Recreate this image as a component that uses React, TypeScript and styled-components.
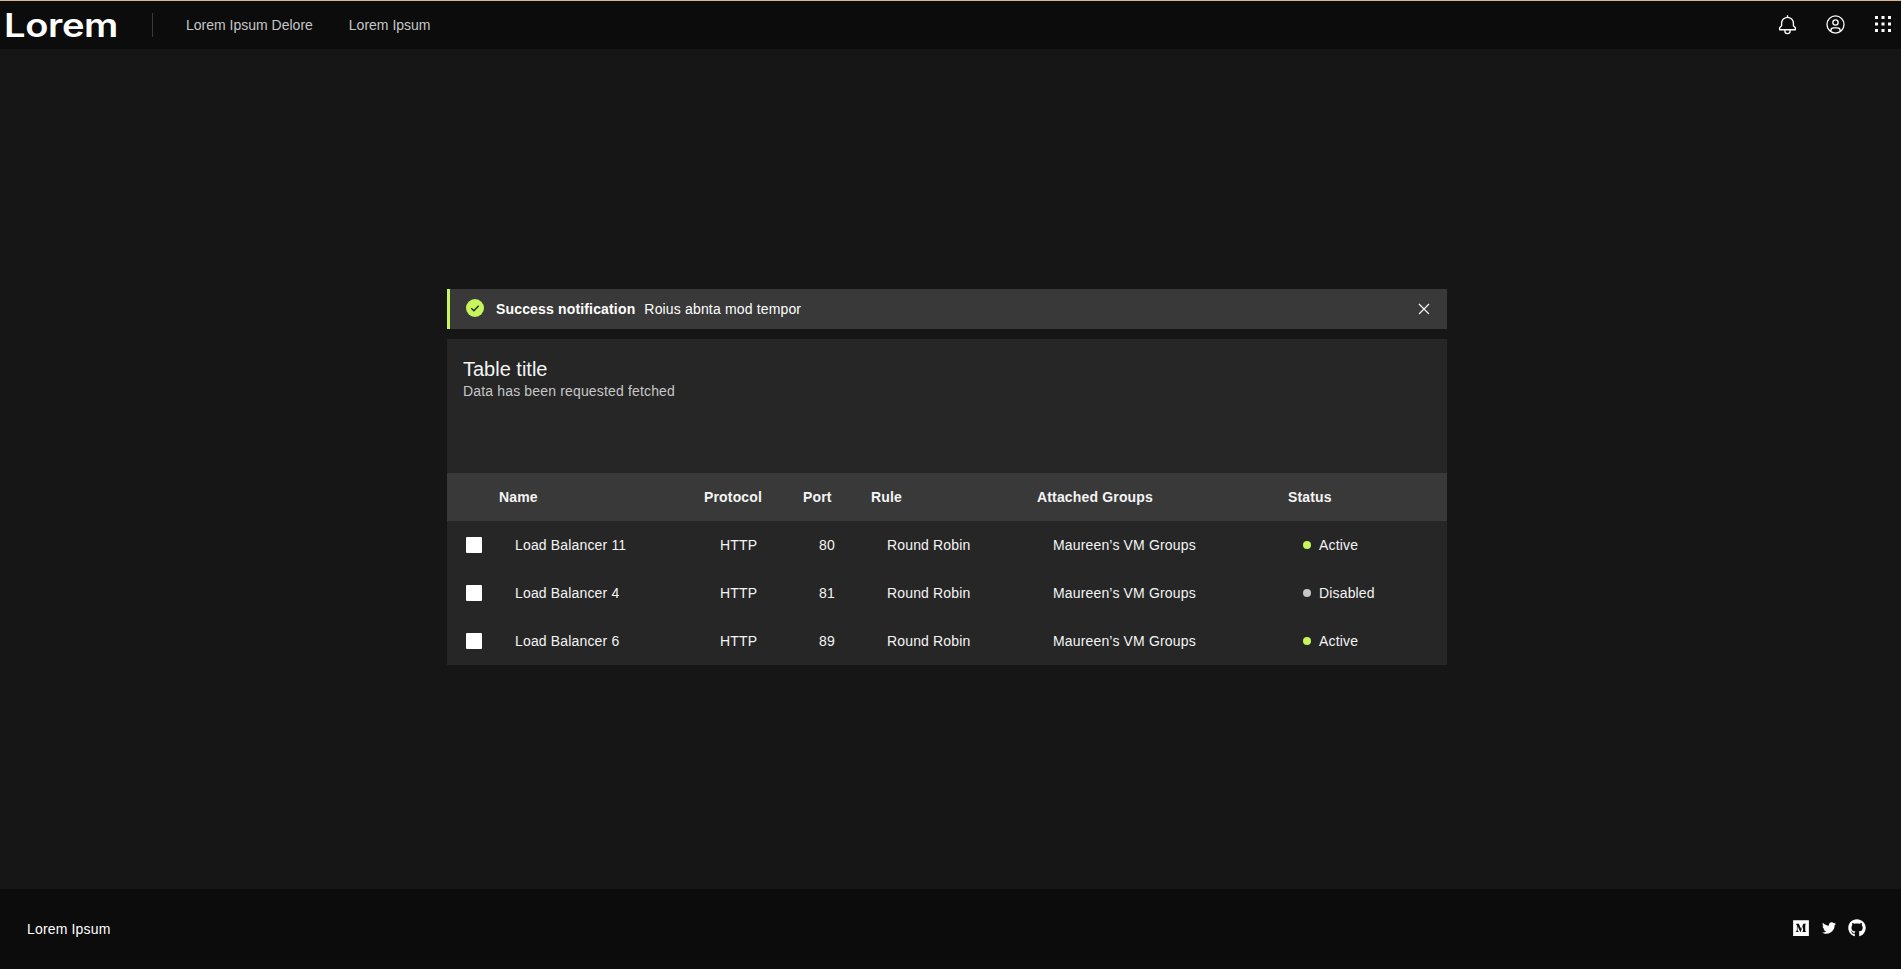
import React from "react";
import styled, { createGlobalStyle } from "styled-components";
import { FaGithub, FaMedium, FaTwitter } from "react-icons/fa";

const Global = createGlobalStyle`
  html, body { margin: 0; padding: 0; background: #161616; }
  body { font-family: "Liberation Sans", Arial, sans-serif; }
`;

const Page = styled.div`
  height: 969px;
  display: flex;
  flex-direction: column;
  background: #161616;
  color: #f4f4f4;
  overflow: hidden;
`;

const Header = styled.header`
  height: 49px;
  box-sizing: border-box;
  border-top: 1px solid #d8b98f;
  background: #0c0c0c;
  display: flex;
  align-items: center;
  padding: 0 8px 0 4px;
  flex-shrink: 0;
`;

const LogoBox = styled.div`
  width: 148px;
  height: 24px;
  border-right: 1px solid #393939;
  display: flex;
  align-items: center;
  margin-right: 15px;
`;

const Logo = styled.span`
  display: inline-block;
  font-family: Inter, "Liberation Sans", sans-serif;
  font-size: 32px;
  font-weight: 600;
  line-height: 24px;
  color: #fff;
  transform: scaleX(1.19);
  transform-origin: left center;
  letter-spacing: -0.3px;
  position: relative;
  top: 1px;
`;

const NavLink = styled.a`
  font-size: 14px;
  line-height: 18px;
  color: #c6c6c6;
  margin: 0 18px;
`;

const Spacer = styled.div`
  flex: 1;
`;

const Actions = styled.div`
  display: flex;
  align-items: center;
  gap: 27px;
  margin-bottom: 2px;
`;

const ActionIcon = styled.svg<{ $size?: number }>`
  width: ${(p) => p.$size ?? 21}px;
  height: ${(p) => p.$size ?? 21}px;
  display: block;
  color: #fff;
`;

const Main = styled.main`
  flex: 1;
  display: flex;
  flex-direction: column;
  align-items: center;
  padding: 240px 7px 0 0;
`;

const Column = styled.div`
  width: 1000px;
`;

const Notice = styled.div`
  height: 40px;
  box-sizing: border-box;
  background: #393939;
  border-left: 3px solid #c8f55c;
  display: flex;
  align-items: center;
  padding: 0 15px;
  font-size: 14px;
  letter-spacing: 0.16px;
  color: #fff;
  margin-bottom: 10px;
`;

const NoticeIcon = styled.svg`
  width: 20px;
  height: 20px;
  display: block;
  margin-bottom: 2px;
`;

const NoticeTitle = styled.strong`
  font-weight: 700;
  margin: 0 9px 0 11px;
`;

const CloseBtn = styled.svg`
  margin-left: auto;
  width: 16px;
  height: 16px;
  color: #f4f4f4;
  display: block;
`;

const Panel = styled.section`
  background: #262626;
`;

const PanelHead = styled.div`
  height: 134px;
  box-sizing: border-box;
  padding: 18px 16px 0;
`;

const Title = styled.h2`
  margin: 0;
  font-size: 20px;
  font-weight: 400;
  line-height: 24px;
  color: #f4f4f4;
`;

const Sub = styled.p`
  margin: 1px 0 0;
  font-size: 14px;
  line-height: 18px;
  letter-spacing: 0.16px;
  color: #c6c6c6;
`;

const Row = styled.div<{ $head?: boolean }>`
  display: grid;
  grid-template-columns: 52px 205px 99px 68px 166px 251px 1fr;
  height: 48px;
  align-items: center;
  font-size: 14px;
  letter-spacing: 0.16px;
  color: #f4f4f4;
  background: ${(p) => (p.$head ? "#393939" : "transparent")};
  font-weight: ${(p) => (p.$head ? 700 : 400)};
`;

const Cell = styled.div`
  padding-left: 16px;
  white-space: nowrap;
`;

const HeadCell = styled.div`
  white-space: nowrap;
`;

const Check = styled.span`
  display: block;
  width: 16px;
  height: 16px;
  margin-left: 19px;
  background: #fff;
  border-radius: 1px;
`;

const StatusCell = styled(Cell)`
  display: flex;
  align-items: center;
  gap: 8px;
  padding-left: 15px;
`;

const Dot = styled.span<{ $active: boolean }>`
  width: 8px;
  height: 8px;
  border-radius: 50%;
  background: ${(p) => (p.$active ? "#c8f55c" : "#c6c6c6")};
`;

const Footer = styled.footer`
  height: 80px;
  flex-shrink: 0;
  background: #0c0c0c;
  display: flex;
  align-items: center;
  padding: 0 35px 0 27px;
  font-size: 14px;
  letter-spacing: 0.16px;
  color: #fff;
`;

const Socials = styled.div`
  margin-left: auto;
  display: flex;
  align-items: center;
  gap: 12px;
  color: #fff;
  margin-bottom: 2px;
`;

const Medium = styled(FaMedium)`
  display: block;
`;

const Twitter = styled(FaTwitter)`
  display: block;
`;

const Github = styled(FaGithub)`
  display: block;
`;

const rows = [
  { name: "Load Balancer 11", port: "80", status: "Active" },
  { name: "Load Balancer 4", port: "81", status: "Disabled" },
  { name: "Load Balancer 6", port: "89", status: "Active" },
];

const dots = [2, 8.5, 15];

export default function App() {
  return (
    <Page>
      <Global />
      <Header>
        <LogoBox>
          <Logo>Lorem</Logo>
        </LogoBox>
        <NavLink>Lorem Ipsum Delore</NavLink>
        <NavLink>Lorem Ipsum</NavLink>
        <Spacer />
        <Actions>
          <ActionIcon viewBox="0 0 32 32" fill="currentColor">
            <path d="M28.7 20.3L26 17.6V14a10 10 0 0 0-9-9.95V2h-2v2.05A10 10 0 0 0 6 14v3.6l-2.7 2.7a1 1 0 0 0-.3.7v3a1 1 0 0 0 1 1h7v.8a5 5 0 0 0 10 0V25h7a1 1 0 0 0 1-1v-3a1 1 0 0 0-.3-.7zM19 25.8a3 3 0 0 1-6 0V25h6zM27 23H5v-1.6l2.7-2.7a1 1 0 0 0 .3-.7V14a8 8 0 0 1 16 0v4a1 1 0 0 0 .3.7l2.7 2.7z" />
          </ActionIcon>
          <ActionIcon viewBox="0 0 32 32" fill="currentColor">
            <path d="M16 8a5 5 0 1 0 5 5 5 5 0 0 0-5-5zm0 8a3 3 0 1 1 3-3 3 3 0 0 1-3 3z" />
            <path d="M16 2a14 14 0 1 0 14 14A14 14 0 0 0 16 2zm-6 24.38V25a3 3 0 0 1 3-3h6a3 3 0 0 1 3 3v1.38a11.9 11.9 0 0 1-12 0zm14-1.45V25a5 5 0 0 0-5-5h-6a5 5 0 0 0-5 5v-.07a12 12 0 1 1 16 0z" />
          </ActionIcon>
          <ActionIcon $size={20} viewBox="0 0 20 20" fill="currentColor">
            {dots.map((y) =>
              dots.map((x) => <rect key={`${x}-${y}`} x={x} y={y} width="3" height="3" />)
            )}
          </ActionIcon>
        </Actions>
      </Header>
      <Main>
        <Column>
          <Notice>
            <NoticeIcon viewBox="0 0 20 20">
              <circle cx="10" cy="10" r="9" fill="#c8f55c" />
              <path d="M6.3 10.2l2.6 2.5 4.8-5" fill="none" stroke="#262626" strokeWidth="1.4" />
            </NoticeIcon>
            <NoticeTitle>Success notification</NoticeTitle>
            Roius abnta mod tempor
            <CloseBtn viewBox="0 0 16 16" fill="none" stroke="currentColor" strokeWidth="1.2">
              <path d="M3 3l10 10M13 3L3 13" />
            </CloseBtn>
          </Notice>
          <Panel>
            <PanelHead>
              <Title>Table title</Title>
              <Sub>Data has been requested fetched</Sub>
            </PanelHead>
            <Row $head>
              <span />
              <HeadCell>Name</HeadCell>
              <HeadCell>Protocol</HeadCell>
              <HeadCell>Port</HeadCell>
              <HeadCell>Rule</HeadCell>
              <HeadCell>Attached Groups</HeadCell>
              <HeadCell>Status</HeadCell>
            </Row>
            {rows.map((r) => (
              <Row key={r.name}>
                <Check />
                <Cell>{r.name}</Cell>
                <Cell>HTTP</Cell>
                <Cell>{r.port}</Cell>
                <Cell>Round Robin</Cell>
                <Cell>Maureen’s VM Groups</Cell>
                <StatusCell>
                  <Dot $active={r.status === "Active"} />
                  {r.status}
                </StatusCell>
              </Row>
            ))}
          </Panel>
        </Column>
      </Main>
      <Footer>
        Lorem Ipsum
        <Socials>
          <Medium size={18} />
          <Twitter size={14} />
          <Github size={18} />
        </Socials>
      </Footer>
    </Page>
  );
}
